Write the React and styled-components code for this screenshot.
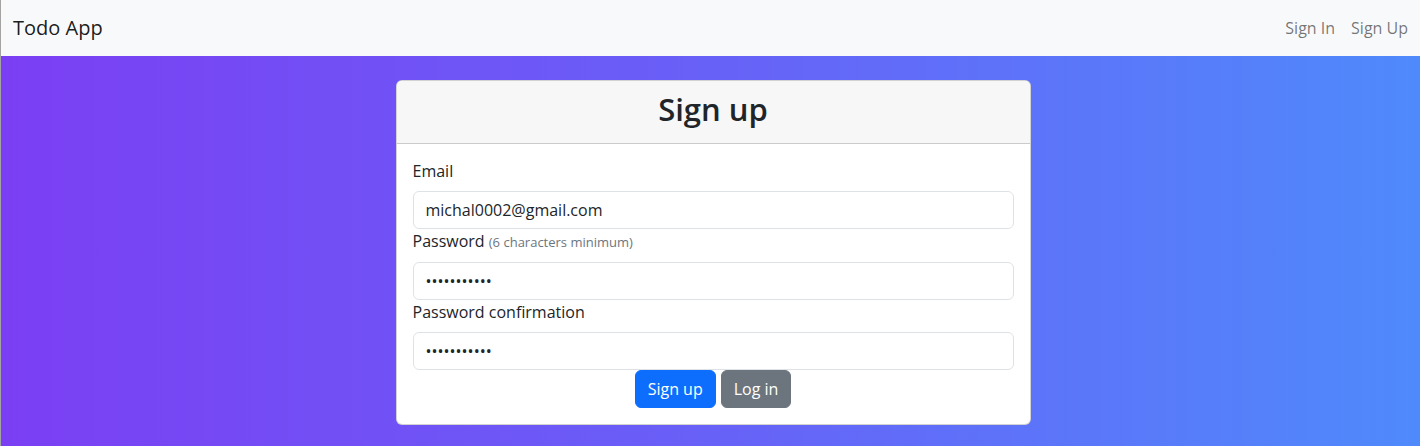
import React, { useState } from 'react';
import styled, { createGlobalStyle } from 'styled-components';

const GlobalStyle = createGlobalStyle`
	* {
		box-sizing: border-box;
	}
	body {
		margin: 0;
		font-family: 'Open Sans', 'Noto Sans', sans-serif;
		font-size: 16px;
		line-height: 1.5;
		color: #212529;
	}
`;

const App = () => {
	const [email, setEmail] = useState('michal0002@gmail.com');
	const [password, setPassword] = useState('12345678901');
	const [confirmation, setConfirmation] = useState('12345678901');

	return (
		<Page>
			<GlobalStyle />
			<Navbar>
				<Brand href="#">Todo App</Brand>
				<NavLinks>
					<NavLink href="#">Sign In</NavLink>
					<NavLink href="#">Sign Up</NavLink>
				</NavLinks>
			</Navbar>
			<Main>
				<Card>
					<CardHeader>
						<Title>Sign up</Title>
					</CardHeader>
					<CardBody>
						<Label>Email</Label>
						<Input type="email" value={email} onChange={e => setEmail(e.target.value)} />
						<Label>
							Password <Hint>(6 characters minimum)</Hint>
						</Label>
						<Input type="password" value={password} onChange={e => setPassword(e.target.value)} />
						<Label>Password confirmation</Label>
						<Input type="password" value={confirmation} onChange={e => setConfirmation(e.target.value)} />
						<Actions>
							<Button variant="primary">Sign up</Button>
							<Button variant="secondary">Log in</Button>
						</Actions>
					</CardBody>
				</Card>
			</Main>
		</Page>
	);
};

const Page = styled.div`
	min-height: 446px;
	display: flex;
	flex-direction: column;
	border-left: 1px solid #a3a3a3;
`;

const Navbar = styled.nav`
	display: flex;
	justify-content: space-between;
	align-items: center;
	height: 56px;
	padding: 0 12px 0 12px;
	background-color: #f8f9fa;
`;

const Brand = styled.a`
	font-size: 20px;
	color: rgba(0, 0, 0, 0.9);
	text-decoration: none;
`;

const NavLinks = styled.div`
	display: flex;
	gap: 16px;
`;

const NavLink = styled.a`
	color: rgba(0, 0, 0, 0.55);
	text-decoration: none;
`;

const Main = styled.main`
	flex: 1;
	display: flex;
	justify-content: center;
	align-items: flex-start;
	padding: 24px 0 21px;
	background: linear-gradient(90deg, #7b3ff3 0%, #6a5df7 45%, #4f8afb 100%);
`;

const Card = styled.section`
	width: 635px;
	margin-left: 5px;
	background-color: #fff;
	border: 1px solid rgba(0, 0, 0, 0.175);
	border-radius: 6px;
	overflow: hidden;
`;

const CardHeader = styled.header`
	height: 63px;
	padding: 7px 16px;
	background-color: #f7f7f7;
	border-bottom: 1px solid rgba(0, 0, 0, 0.175);
	text-align: center;
`;

const Title = styled.h2`
	margin: 0;
	font-size: 31px;
	font-weight: 600;
	line-height: 1.4;
`;

const CardBody = styled.div`
	display: flex;
	flex-direction: column;
	padding: 15px 16px 16px;
`;

const Label = styled.label`
	margin-bottom: 8px;
	line-height: 24px;
`;

const Hint = styled.small`
	font-size: 13px;
	color: #6c757d;
`;

const Input = styled.input`
	height: 38px;
	padding: 6px 12px;
	font: inherit;
	color: #212529;
	border: 1px solid #dee2e6;
	border-radius: 6px;
	outline: none;
`;

const Actions = styled.div`
	display: flex;
	justify-content: center;
	gap: 5px;
`;

const Button = styled.button`
	height: 38px;
	padding: 6px 12px;
	font: inherit;
	color: #fff;
	border: 1px solid ${p => (p.variant === 'primary' ? '#0d6efd' : '#6c757d')};
	border-radius: 6px;
	background-color: ${p => (p.variant === 'primary' ? '#0d6efd' : '#6c757d')};
	cursor: pointer;
`;

export default App;
